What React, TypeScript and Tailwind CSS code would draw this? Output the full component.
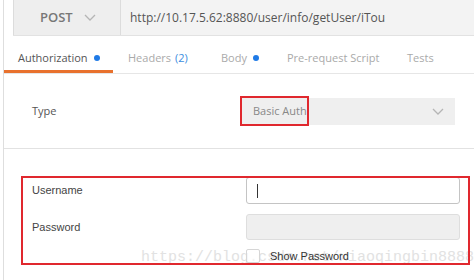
import React from 'react'

const Chevron = ({ className }: { className?: string }) => (
	<svg className={className} width="12" height="7" viewBox="0 0 12 7" fill="none">
		<path d="M1 1l5 5 5-5" stroke="#b5b5b5" strokeWidth="1.3" />
	</svg>
)

const tabs = [
	{ w: 'w-[109px] pl-[14px]', label: 'Authorization', dot: true, active: true },
	{ w: 'w-[93px] pl-[15px]', label: 'Headers', count: '(2)' },
	{ w: 'w-[66px] pl-[15px]', label: 'Body', dot: true },
	{ w: 'w-[120px] pl-[15px]', label: 'Pre-request Script' },
	{ w: 'flex-1 pl-[15px]', label: 'Tests' },
]

const App = () => {
	return (
		<div className="relative w-[474px] h-[280px] overflow-hidden bg-white">
			<div className="ml-[3px] h-full border-l border-[#dedede] font-['Open_Sans',sans-serif]">
				{/* request bar */}
				<div className="flex h-[36px] ml-[9px] border-b border-[#e2e2e2]">
					<div className="flex items-center w-[108px] bg-[#eeeeee] border-l border-r border-[#dcdcdc] pl-[26px]">
						<span className="text-[13px] font-semibold text-[#777]">POST</span>
						<Chevron className="ml-[11px]" />
					</div>
					<div className="flex-1 flex items-center bg-[#f3f3f3] pl-[9px]">
						<span className="text-[12px] text-[#555]">http://10.17.5.62:8880/user/info/getUser/iTou</span>
					</div>
				</div>

				{/* tabs */}
				<div className="flex h-[38px] border-b border-[#e6e6e6]">
					{tabs.map((t) => (
						<div
							key={t.label}
							className={`${t.w} pt-[15px] ${t.active ? 'border-b-[3px] border-[#e8712d]' : ''}`}
						>
							<div className="flex items-center text-[11px] leading-[14px]">
								<span className={t.active ? 'text-[#555]' : 'text-[#aaa]'}>{t.label}</span>
								{t.count && <span className="ml-[4px] text-[#3b8de0]">{t.count}</span>}
								{t.dot && <span className="ml-[6px] w-[6px] h-[6px] rounded-full bg-[#1f7ae6]" />}
							</div>
						</div>
					))}
				</div>

				{/* type */}
				<div className="flex items-center pt-[24px] pb-[23px] border-b border-[#e2e2e2]">
					<div className="w-[237px] pl-[28px] text-[11px] text-[#555]">Type</div>
					<div className="relative flex items-center justify-between w-[214px] h-[27px] bg-[#efefef] pl-[12px] pr-[11px]">
						<span className="text-[11px] text-[#888]">Basic Auth</span>
						<Chevron />
						<div className="absolute left-[-1px] top-[-2px] w-[69px] h-[30px] border-2 border-[#e0282e]" />
					</div>
				</div>

				{/* credentials */}
				<div className="relative pt-[28px] font-['Liberation_Sans',Arial,sans-serif] text-[11px] text-[#444]">
					<div className="absolute left-[137px] top-[100px] font-['Liberation_Mono',monospace] text-[15px] leading-[17px] text-[#e2e2e2] pointer-events-none">
						https://blog.csdn.net/xiaoqingbin8888
					</div>
					<div className="relative flex items-center">
						<div className="w-[242px] pl-[28px]">Username</div>
						<div className="flex items-center w-[214px] h-[27px] bg-white border border-[#c4c4c4] rounded-[3px] pl-[10px]">
							<span className="w-px h-[14px] bg-[#333]" />
						</div>
					</div>
					<div className="relative flex items-center mt-[10px]">
						<div className="w-[242px] pl-[28px]">Password</div>
						<div className="w-[214px] h-[26px] bg-[#efefef] border border-[#dedede] rounded-[3px]" />
					</div>
					<div className="relative flex items-center mt-[8px] pl-[242px]">
						<span className="w-[14px] h-[14px] bg-white/60 border border-[#d6d6d6] rounded-[2px]" />
						<span className="ml-[10px] text-[#333]">Show Password</span>
					</div>
					<div className="absolute left-[17px] top-[27px] w-[449px] h-[89px] border-2 border-[#e0282e]" />
				</div>
			</div>
		</div>
	)
}

export default App
